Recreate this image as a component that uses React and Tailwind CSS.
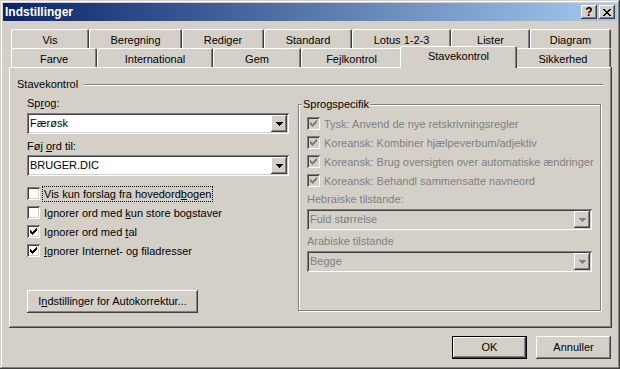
import React from "react";

const RAISED =
  "shadow-[inset_-1px_-1px_#404040,inset_1px_1px_#ffffff,inset_-2px_-2px_#808080,inset_2px_2px_#d4d0c8]";
const SUNKEN =
  "shadow-[inset_1px_1px_#808080,inset_-1px_-1px_#ffffff,inset_2px_2px_#404040,inset_-2px_-2px_#d4d0c8]";

function Pix({ rows, color }) {
  const rects = [];
  rows.forEach((r, y) =>
    [...r].forEach((c, x) => {
      if (c === "x") rects.push(<rect key={x + "-" + y} x={x} y={y} width="1" height="1" />);
    })
  );
  return (
    <svg
      width={rows[0].length}
      height={rows.length}
      viewBox={`0 0 ${rows[0].length} ${rows.length}`}
      fill={color}
      shapeRendering="crispEdges"
      className="block"
    >
      {rects}
    </svg>
  );
}

const CHECK = ["......x", ".....xx", "x...xxx", "xx.xxx.", "xxxxx..", ".xxx...", "..x...."];
const ARROW = ["xxxxxxx", ".xxxxx.", "..xxx..", "...x..."];
const CLOSE = ["xx....xx", ".xx..xx.", "..xxxx..", "...xx...", "..xxxx..", ".xx..xx.", "xx....xx"];

function CheckBox({ checked, disabled }) {
  return (
    <div
      className={`relative w-[13px] h-[13px] shrink-0 ${SUNKEN} ${disabled ? "bg-[#d4d0c8]" : "bg-white"}`}
    >
      {checked && (
        <div className="absolute left-[3px] top-[3px]">
          <Pix rows={CHECK} color={disabled ? "#808080" : "#000000"} />
        </div>
      )}
    </div>
  );
}

function CheckRow({ checked, disabled, focused, children }) {
  return (
    <div className="flex items-center h-[19px]">
      <CheckBox checked={checked} disabled={disabled} />
      <span
        className={`ml-[2px] px-[1px] leading-[14px] border ${
          focused ? "border-dotted border-black" : "border-transparent"
        } ${disabled ? "text-[#808080]" : "text-black"}`}
      >
        {children}
      </span>
    </div>
  );
}

function Combo({ value, disabled, width }) {
  return (
    <div
      className={`${width} h-[21px] flex items-center p-[2px] ${SUNKEN} ${
        disabled ? "bg-[#d4d0c8]" : "bg-white"
      }`}
    >
      <span className={`flex-1 pl-[1px] leading-[13px] ${disabled ? "text-[#808080]" : "text-black"}`}>
        {value}
      </span>
      <div className={`w-[16px] h-[17px] bg-[#d4d0c8] ${RAISED} flex items-center justify-center`}>
        <Pix rows={ARROW} color={disabled ? "#808080" : "#000000"} />
      </div>
    </div>
  );
}

const ROW1 = [
  { label: "Vis", w: "w-[78px]" },
  { label: "Beregning", w: "w-[93px]" },
  { label: "Rediger", w: "w-[82px]" },
  { label: "Standard", w: "w-[88px]" },
  { label: "Lotus 1-2-3", w: "w-[99px]" },
  { label: "Lister", w: "w-[79px]" },
  { label: "Diagram", w: "w-[81px]" },
];
const ROW2 = [
  { label: "Farve", w: "w-[86px]" },
  { label: "International", w: "w-[116px]" },
  { label: "Gem", w: "w-[88px]" },
  { label: "Fejlkontrol", w: "w-[101px]" },
  { label: "Stavekontrol", w: "w-[117px]", selected: true },
  { label: "Sikkerhed", w: "w-[96px]" },
];

const TAB_SHADOW = "shadow-[inset_1px_1px_#ffffff,inset_-1px_0_#404040,inset_-2px_0_#808080]";

function Tab({ label, w, selected }) {
  if (selected) {
    return (
      <div
        className={`relative z-10 ${w} shrink-0 mx-[-2px] mt-[-2px] h-[22px] bg-[#d4d0c8] rounded-t-[2px] ${TAB_SHADOW} flex justify-center pt-[4px] leading-[13px]`}
      >
        {label}
      </div>
    );
  }
  return (
    <div
      className={`${w} shrink-0 h-[19px] bg-[#d4d0c8] rounded-t-[2px] ${TAB_SHADOW} flex justify-center pt-[5px] leading-[13px]`}
    >
      {label}
    </div>
  );
}

function Button({ children, def, width }) {
  if (def) {
    return (
      <div className={`${width} h-[23px] border border-black`}>
        <div className={`w-full h-full ${RAISED} flex items-center justify-center`}>{children}</div>
      </div>
    );
  }
  return <div className={`${width} h-[23px] ${RAISED} flex items-center justify-center`}>{children}</div>;
}

export default function App() {
  return (
    <div
      className={`w-[620px] h-[369px] bg-[#d4d0c8] p-[3px] shadow-[inset_-1px_-1px_#404040,inset_1px_1px_#d4d0c8,inset_-2px_-2px_#808080,inset_2px_2px_#ffffff] text-[11px] text-black font-['Liberation_Sans',Arial,sans-serif] select-none`}
    >
      {/* Title bar */}
      <div className="h-[18px] flex items-center justify-between bg-[linear-gradient(to_right,#0a246a,#a6caf0)] pl-[2px] pr-[2px]">
        <span className="text-white font-bold text-[12px] leading-[14px]">Indstillinger</span>
        <div className="flex gap-[2px]">
          <div className={`w-[16px] h-[14px] ${RAISED} bg-[#d4d0c8] flex items-center justify-center`}>
            <span className="font-bold text-[12px] leading-[11px] text-black">?</span>
          </div>
          <div className={`w-[16px] h-[14px] ${RAISED} bg-[#d4d0c8] flex items-center justify-center`}>
            <Pix rows={CLOSE} color="#000000" />
          </div>
        </div>
      </div>

      {/* Client */}
      <div className="mt-[1px] pt-[7px] pl-[6px]">
        <div className="ml-[2px] w-[600px] flex">
          {ROW1.map((t) => (
            <Tab key={t.label} {...t} />
          ))}
        </div>
        <div className="ml-[2px] w-[600px] h-[19px] flex items-start">
          {ROW2.map((t) => (
            <Tab key={t.label} {...t} />
          ))}
        </div>

        {/* Panel */}
        <div className={`w-[603px] h-[261px] bg-[#d4d0c8] ${RAISED}`}>
          <div className="flex items-center pl-[8px] pr-[9px] pt-[11px]">
            <span className="leading-[13px]">Stavekontrol</span>
            <div className="flex-1 ml-[6px] border-t border-t-[#808080] border-b border-b-white" />
          </div>

          <div className="flex pl-[18px] mt-[6px]">
            {/* Left column */}
            <div className="w-[262px] flex flex-col">
              <div className="leading-[13px]">
                Sp<span className="underline">r</span>og:
              </div>
              <div className="mt-[3px]">
                <Combo value="Færøsk" width="w-[262px]" />
              </div>
              <div className="mt-[6px] leading-[13px]">
                Føj <span className="underline">o</span>rd til:
              </div>
              <div className="mt-[2px]">
                <Combo value="BRUGER.DIC" width="w-[262px]" />
              </div>
              <div className="mt-[8px]">
                <CheckRow focused>
                  Vis kun forslag fra hovedord<span className="underline">b</span>ogen
                </CheckRow>
                <CheckRow>
                  Ignorer ord med <span className="underline">k</span>un store bogstaver
                </CheckRow>
                <CheckRow checked>
                  Ignorer ord med <span className="underline">t</span>al
                </CheckRow>
                <CheckRow checked>
                  <span className="underline">I</span>gnorer Internet- og filadresser
                </CheckRow>
              </div>
              <div className="mt-[30px]">
                <Button width="w-[171px]">
                  I<span className="underline">n</span>dstillinger for Autokorrektur...
                </Button>
              </div>
            </div>

            {/* Right group */}
            <div className="ml-[9px] pt-[7px]">
              <div className="relative w-[303px] h-[207px] border border-[#808080] shadow-[inset_1px_1px_#ffffff,1px_1px_#ffffff]">
                <span className="absolute top-[-7px] left-[3px] bg-[#d4d0c8] px-[1px] leading-[13px]">
                  Sprogspecifik
                </span>
                <div className="pl-[8px] pt-[9px] flex flex-col">
                  <CheckRow checked disabled>
                    Tysk: Anvend de nye retskrivningsregler
                  </CheckRow>
                  <CheckRow checked disabled>
                    Koreansk: Kombiner hjælpeverbum/adjektiv
                  </CheckRow>
                  <CheckRow checked disabled>
                    Koreansk: Brug oversigten over automatiske ændringer
                  </CheckRow>
                  <CheckRow checked disabled>
                    Koreansk: Behandl sammensatte navneord
                  </CheckRow>
                  <div className="mt-[3px] leading-[13px] text-[#808080]">Hebraiske tilstande:</div>
                  <div className="mt-[3px]">
                    <Combo value="Fuld størrelse" disabled width="w-[285px]" />
                  </div>
                  <div className="mt-[5px] leading-[13px] text-[#808080]">Arabiske tilstande</div>
                  <div className="mt-[3px]">
                    <Combo value="Begge" disabled width="w-[285px]" />
                  </div>
                </div>
              </div>
            </div>
          </div>
        </div>

        {/* Bottom buttons */}
        <div className="mt-[8px] flex justify-end pr-[6px] gap-[9px]">
          <Button def width="w-[75px]">
            OK
          </Button>
          <Button width="w-[75px]">Annuller</Button>
        </div>
      </div>
    </div>
  );
}
